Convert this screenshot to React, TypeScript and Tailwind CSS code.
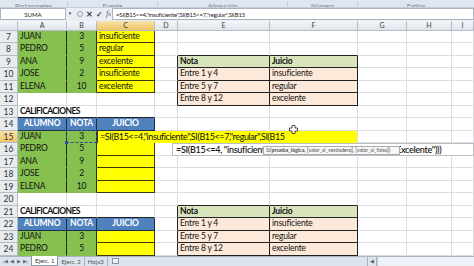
import React from 'react';

type Kind =
  | 'blank'
  | 'greenA'
  | 'greenB'
  | 'yellow'
  | 'blue'
  | 'head'
  | 'peach'
  | 'topDark'
  | 'rightDark';

interface Cell {
  t?: string;
  k?: Kind;
  c?: boolean;
  b?: boolean;
}

const COLS = ['w-[49px]', 'w-[30px]', 'w-[58px]', 'w-[23px]', 'w-[92px]', 'w-[88px]', 'w-[49px]', 'w-[45px]', 'w-[22px]'];
const LETTERS = ['A', 'B', 'C', 'D', 'E', 'F', 'G', 'H', 'I'];

const KIND: Record<Kind, string> = {
  blank: 'bg-white border-r border-b border-[#dadde1]',
  greenA: 'bg-[#86c04f] border-r border-r-[#1e2a12] border-b border-b-[#86c04f]',
  greenB: 'bg-[#86c04f] border-r border-r-[#1e2a12] border-b border-b-[#86c04f]',
  yellow: 'bg-[#ffff00] border-r border-b border-[#3b3b14]',
  blue: 'bg-[#4f81bd] border-r border-b border-[#1b2d47] text-white font-bold',
  head: 'bg-[#d8e4bc] border-r border-b border-[#222] font-bold',
  peach: 'bg-[#fde9d9] border-r border-b border-[#222]',
  topDark: 'bg-white border-r border-r-[#dadde1] border-b border-b-[#222]',
  rightDark: 'bg-white border-r border-r-[#222] border-b border-b-[#dadde1]',
};

const g = (name: string, nota: string, juicio: string): Cell[] => [
  { t: name, k: 'greenA' },
  { t: nota, k: 'greenB', c: true },
  { t: juicio, k: 'yellow' },
];

const table = (a: string, b: string, k: Kind): Cell[] => [
  { k: 'rightDark' },
  { t: a, k },
  { t: b, k },
];

const blank3: Cell[] = [{}, {}, {}];

const ROWS: { n: number; cells: Cell[] }[] = [
  { n: 7, cells: [...g('JUAN', '3', 'insuficiente'), ...blank3] },
  { n: 8, cells: [...g('PEDRO', '5', 'regular'), {}, { k: 'topDark' }, { k: 'topDark' }] },
  { n: 9, cells: [...g('ANA', '9', 'excelente'), ...table('Nota', 'Juicio', 'head')] },
  { n: 10, cells: [...g('JOSE', '2', 'insuficiente'), ...table('Entre 1 y 4', 'insuficiente', 'peach')] },
  { n: 11, cells: [...g('ELENA', '10', 'excelente'), ...table('Entre 5 y 7', 'regular', 'peach')] },
  { n: 12, cells: [...blank3, ...table('Entre 8 y 12', 'excelente', 'peach')] },
  { n: 13, cells: [{ t: 'CALIFICACIONES', k: 'topDark', b: true }, { k: 'topDark' }, { k: 'topDark' }, ...blank3] },
  { n: 14, cells: [{ t: 'ALUMNO', k: 'blue', c: true }, { t: 'NOTA', k: 'blue', c: true }, { t: 'JUICIO', k: 'blue', c: true }, ...blank3] },
  { n: 15, cells: [...g('JUAN', '3', ''), ...blank3] },
  { n: 16, cells: [...g('PEDRO', '5', ''), ...blank3] },
  { n: 17, cells: [...g('ANA', '9', ''), ...blank3] },
  { n: 18, cells: [...g('JOSE', '2', ''), ...blank3] },
  { n: 19, cells: [...g('ELENA', '10', ''), ...blank3] },
  { n: 20, cells: [...blank3, {}, { k: 'topDark' }, { k: 'topDark' }] },
  { n: 21, cells: [{ t: 'CALIFICACIONES', k: 'topDark', b: true }, { k: 'topDark' }, { k: 'topDark' }, ...table('Nota', 'Juicio', 'head')] },
  { n: 22, cells: [{ t: 'ALUMNO', k: 'blue', c: true }, { t: 'NOTA', k: 'blue', c: true }, { t: 'JUICIO', k: 'blue', c: true }, ...table('Entre 1 y 4', 'insuficiente', 'peach')] },
  { n: 23, cells: [...g('JUAN', '3', ''), ...table('Entre 5 y 7', 'regular', 'peach')] },
  { n: 24, cells: [...g('PEDRO', '5', ''), ...table('Entre 8 y 12', 'excelente', 'peach')] },
];

const FORMULA = '=SI(B15<=4,"insuficiente",SI(B15<=7,"regular",SI(B15';

function Ribbon() {
  return (
    <div className="h-[8px] flex items-end bg-[#dfe6ef] border-b border-[#c5cfdb] overflow-hidden text-[6.5px] leading-[8px] text-[#7a838f]">
      <div className="w-[68px] text-center border-r border-[#c5cfdb] -mb-[3px]">Portapapeles</div>
      <div className="w-[90px] text-center border-r border-[#c5cfdb] -mb-[3px]">Fuente</div>
      <div className="w-[130px] text-center border-r border-[#c5cfdb] -mb-[3px]">Alineación</div>
      <div className="w-[70px] text-center border-r border-[#c5cfdb] -mb-[3px]">Número</div>
      <div className="flex-1 text-center -mb-[3px]">Estilos</div>
    </div>
  );
}

function FormulaBar() {
  return (
    <div className="h-[13px] flex items-stretch bg-[#e9eef4] pb-[1px] text-[6px] tracking-[-0.15px] text-[#222]">
      <div className="w-[66px] bg-white border border-[#a9b4c2] flex items-center justify-center tracking-normal">SUMA</div>
      <div className="w-[8px] flex items-center justify-center text-[4.5px] text-[#444]">▼</div>
      <div className="w-[38px] flex items-center gap-[3px] pl-[3px] text-[#555] tracking-normal">
        <span className="w-[6px] h-[6px] rounded-full border border-[#9aa4b0]" />
        <span className="text-[8px] font-bold text-[#444]">✕</span>
        <span className="text-[8px] font-bold text-[#444]">✓</span>
        <span className="italic font-['Liberation_Serif',serif] text-[8px]">f<span className="text-[6px]">x</span></span>
      </div>
      <div className="flex-1 bg-white border border-[#a9b4c2] flex items-center pl-[3px] whitespace-nowrap overflow-hidden">{FORMULA}</div>
    </div>
  );
}

function ColumnHeaders() {
  return (
    <div className="h-[9.5px] flex bg-gradient-to-b from-[#f4f6f9] to-[#dde2e8] text-[7px] leading-[9px] text-[#3a3f46]">
      <div className="w-[18px] border-r border-b border-[#b3bcc7]" />
      {LETTERS.map((l, i) => (
        <div
          key={l}
          className={`${COLS[i]} text-center border-r border-b border-[#b3bcc7] ${l === 'C' ? 'bg-gradient-to-b from-[#f9e2a8] to-[#f0c466]' : ''}`}
        >
          {l}
        </div>
      ))}
    </div>
  );
}

function Grid() {
  return (
    <div className="flex flex-col text-[8.5px] tracking-[-0.2px] text-[#111]">
      {ROWS.map((row) => {
        const cells = [...row.cells];
        while (cells.length < 9) cells.push({});
        return (
          <div key={row.n} className="h-[12.5px] flex">
            <div
              className={`w-[18px] border-r border-b border-[#b3bcc7] text-center leading-[12px] text-[8.5px] tracking-normal text-[#333] ${
                row.n === 15 ? 'bg-gradient-to-b from-[#f9e2a8] to-[#f0c466]' : 'bg-[#e8ecf1]'
              }`}
            >
              {row.n}
            </div>
            {cells.map((cell, i) => (
              <div
                key={i}
                className={`${COLS[i]} ${KIND[cell.k ?? 'blank']} leading-[11.5px] px-[2px] whitespace-nowrap ${
                  cell.c ? 'text-center' : ''
                } ${cell.b ? 'font-bold tracking-[-0.6px]' : ''}`}
              >
                {cell.t && <span className="relative">{cell.t}</span>}
              </div>
            ))}
          </div>
        );
      })}
    </div>
  );
}

function Overlays() {
  return (
    <>
      {/* referenced cell B15 */}
      <div className="absolute left-[66px] top-[130px] w-[31px] h-[13px] border border-dashed border-[#2c4f9a]">
        <div className="absolute -left-[2px] -bottom-[2px] w-[3px] h-[3px] bg-[#2c4f9a]" />
      </div>
      {/* editing C15 */}
      <div className="absolute left-[97px] top-[130.5px] w-[260px] h-[12.5px] bg-[#ffff00] border-l border-[#3b3b14] pl-[2px] text-[9px] tracking-[-0.4px] leading-[12px] text-[#111] whitespace-nowrap overflow-hidden">
        {FORMULA}
      </div>
      {/* formula note */}
      <div className="absolute left-[172px] top-[143px] w-[302px] h-[13px] bg-white border border-[#b9bec4] pl-[3px] text-[9px] tracking-[-0.3px] leading-[11px] font-semibold text-[#1a1a1a] whitespace-nowrap overflow-hidden">
        =SI(B15&lt;=4, "insuficiente", SI(B15&lt;=7, "regular", SI(B15&lt;=8,"Excelente")))
      </div>
      {/* tooltip */}
      <div className="absolute left-[263px] top-[146px] w-[137px] h-[9px] bg-[#f7f7f7] border border-[#a8acb2] text-[5.5px] tracking-[-0.1px] leading-[7px] text-[#555] px-[2px] whitespace-nowrap overflow-hidden">
        SI(<span className="font-bold">prueba_lógica</span>, [valor_si_verdadero], [valor_si_falso])
      </div>
      {/* mouse cursor */}
      <svg className="absolute left-[289px] top-[125px]" width="9" height="9" viewBox="0 0 9 9">
        <path d="M3 0.5h3v2.5h2.5v3H6v2.5H3V6H0.5V3H3z" fill="#fff" stroke="#222" strokeWidth="0.8" />
      </svg>
    </>
  );
}

function SheetTabs() {
  return (
    <div className="h-[10.5px] flex items-stretch bg-[#dce3ec] border-t border-[#a9b4c2] text-[6px] leading-[9px] text-[#333]">
      <div className="w-[31px] flex items-center justify-around px-[2px] text-[4.5px] text-[#667]">
        <span>|◀</span>
        <span>◀</span>
        <span>▶</span>
        <span>▶|</span>
      </div>
      <div className="px-[3px] bg-white border-x border-b border-[#8c98a8] -mt-[1px]">Ejerc. 1</div>
      <div className="px-[3px] border-r border-[#a9b4c2] text-[#555]">Ejerc. 2</div>
      <div className="px-[3px] border-r border-[#a9b4c2] text-[#555]">Hoja3</div>
      <div className="w-[16px] flex items-center justify-center">
        <span className="w-[7px] h-[6px] border border-[#8a96a6] bg-[#eef2f6]" />
      </div>
      <div className="flex-1" />
      <div className="w-[10px] border-x border-[#a9b4c2] flex items-center justify-center text-[4.5px] text-[#556]">◀</div>
      <div className="w-[97px] bg-[#eef2f6] border-l border-[#c0c8d2]" />
    </div>
  );
}

export default function App() {
  return (
    <div className="relative w-[474px] h-[266px] overflow-hidden bg-white font-['Lato','Liberation_Sans',sans-serif]">
      <Ribbon />
      <FormulaBar />
      <ColumnHeaders />
      <Grid />
      <SheetTabs />
      <Overlays />
    </div>
  );
}
